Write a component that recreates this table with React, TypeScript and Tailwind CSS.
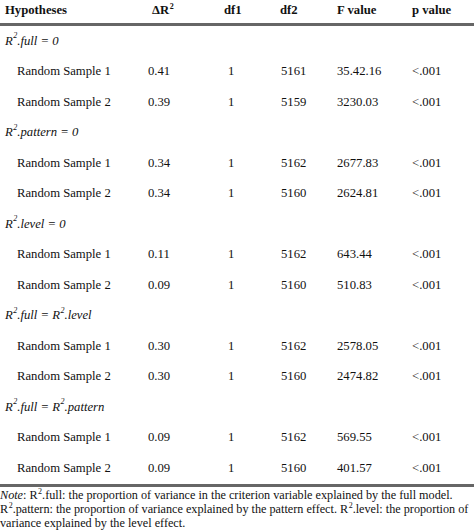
import React from "react";

type Row = { label: string; dr: string; df1: string; df2: string; f: string; p: string };
type Group = { title: React.ReactNode; rows: Row[] };

const R2 = () => (
  <>
    R<sup className="text-[8px] relative -top-[5px] ml-[0.5px]">2</sup>
  </>
);

const groups: Group[] = [
  {
    title: <><R2 />.full = 0</>,
    rows: [
      { label: "Random Sample 1", dr: "0.41", df1: "1", df2: "5161", f: "35.42.16", p: "<.001" },
      { label: "Random Sample 2", dr: "0.39", df1: "1", df2: "5159", f: "3230.03", p: "<.001" },
    ],
  },
  {
    title: <><R2 />.pattern = 0</>,
    rows: [
      { label: "Random Sample 1", dr: "0.34", df1: "1", df2: "5162", f: "2677.83", p: "<.001" },
      { label: "Random Sample 2", dr: "0.34", df1: "1", df2: "5160", f: "2624.81", p: "<.001" },
    ],
  },
  {
    title: <><R2 />.level = 0</>,
    rows: [
      { label: "Random Sample 1", dr: "0.11", df1: "1", df2: "5162", f: "643.44", p: "<.001" },
      { label: "Random Sample 2", dr: "0.09", df1: "1", df2: "5160", f: "510.83", p: "<.001" },
    ],
  },
  {
    title: <><R2 />.full = <R2 />.level</>,
    rows: [
      { label: "Random Sample 1", dr: "0.30", df1: "1", df2: "5162", f: "2578.05", p: "<.001" },
      { label: "Random Sample 2", dr: "0.30", df1: "1", df2: "5160", f: "2474.82", p: "<.001" },
    ],
  },
  {
    title: <><R2 />.full = <R2 />.pattern</>,
    rows: [
      { label: "Random Sample 1", dr: "0.09", df1: "1", df2: "5162", f: "569.55", p: "<.001" },
      { label: "Random Sample 2", dr: "0.09", df1: "1", df2: "5160", f: "401.57", p: "<.001" },
    ],
  },
];

const cols = "grid grid-cols-[148px_76px_56px_57px_75px_62px] items-center";

export default function App() {
  return (
    <div
      className="w-[474px] h-[530px] overflow-hidden bg-white text-[#111] text-[12.7px] leading-none"
      style={{ fontFamily: '"Liberation Serif", "Times New Roman", serif' }}
    >
      {/* header */}
      <div className={`${cols} h-[26px] pb-[2px] border-b-[3px] border-[#666] font-bold`}>
        <div className="pl-[5px]">Hypotheses</div>
        <div className="pl-[4px]">
          ΔR<sup className="text-[8px] relative -top-[5px] ml-[0.5px]">2</sup>
        </div>
        <div>df1</div>
        <div>df2</div>
        <div>F value</div>
        <div>p value</div>
      </div>

      {/* body */}
      <div>
        {groups.map((g, gi) => (
          <React.Fragment key={gi}>
            <div className="h-[30.5px] flex items-center pl-[5px] italic">{g.title}</div>
            {g.rows.map((r, ri) => (
              <div key={ri} className={`${cols} h-[30.5px]`}>
                <div className="pl-[17px]">{r.label}</div>
                <div>{r.dr}</div>
                <div className="pl-[4px]">{r.df1}</div>
                <div className="pl-[1px]">{r.df2}</div>
                <div>{r.f}</div>
                <div>{r.p}</div>
              </div>
            ))}
          </React.Fragment>
        ))}
      </div>

      {/* note */}
      <div className="border-t-[3px] border-[#666] pt-[1px] text-[12.2px] leading-[14px] whitespace-nowrap">
        <div>
          <span className="italic">Note</span>: <R2 />.full: the proportion of variance in the criterion variable explained by the full model.
        </div>
        <div>
          <R2 />.pattern: the proportion of variance explained by the pattern effect. <R2 />.level: the proportion of
        </div>
        <div>variance explained by the level effect.</div>
      </div>
    </div>
  );
}
